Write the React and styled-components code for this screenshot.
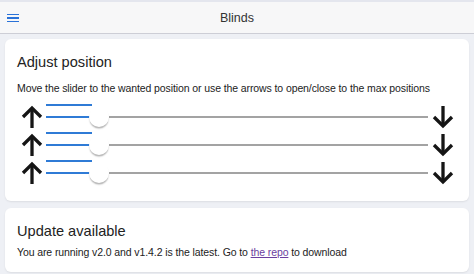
import React from "react";
import styled, { createGlobalStyle } from "styled-components";

const GlobalStyle = createGlobalStyle`
    body {
        margin: 0;
        background: #eef0f5;
        font-family: "Liberation Sans", Arial, sans-serif;
        color: #2b2b2b;
    }
`;

const Header = styled.header`
    position: relative;
    height: 31px;
    border-top: 2px solid #e4e6ee;
    border-bottom: 1px solid #cdced6;
    background: #f7f7f8;
    display: flex;
    align-items: center;
    justify-content: center;
`;

const MenuButton = styled.button`
    position: absolute;
    left: 7px;
    top: 10px;
    width: 12px;
    height: 12px;
    padding: 0;
    border: none;
    background: none;
    display: flex;
    flex-direction: column;
    justify-content: center;
    gap: 2px;
    span {
        display: block;
        height: 1.5px;
        background: #2a72d8;
    }
`;

const Title = styled.h1`
    margin: 0;
    font-size: 12.5px;
    font-weight: normal;
    color: #333;
`;

const Main = styled.main`
    padding: 5px 5px;
    display: flex;
    flex-direction: column;
    gap: 7px;
`;

const Card = styled.section`
    background: #fff;
    border-radius: 6px;
    box-shadow: 0 1px 2px rgba(0, 0, 0, 0.08);
    padding: ${(p) => p.$padding};
`;

const CardTitle = styled.h2`
    margin: 0;
    font-size: 14.6px;
    line-height: 20px;
    font-weight: normal;
    color: #222;
`;

const Text = styled.p`
    margin: ${(p) => p.$margin || "0"};
    font-size: 10.5px;
    letter-spacing: -0.1px;
    line-height: 14px;
    white-space: nowrap;
    color: #222;
    a {
        color: #6b3fa0;
    }
`;

const Rows = styled.div`
    margin-top: 8px;
    display: flex;
    flex-direction: column;
`;

const Row = styled.div`
    height: 28px;
    display: flex;
    align-items: center;
`;

const ArrowButton = styled.button`
    width: 26px;
    height: 26px;
    padding: 0;
    margin: ${(p) => p.$margin};
    border: none;
    background: none;
    svg {
        display: block;
    }
`;

const Slider = styled.div`
    flex: 1;
    display: flex;
    align-items: center;
    height: 28px;
`;

const Fill = styled.div`
    position: relative;
    width: 44px;
    height: 2px;
    background: #2f7bd6;
    &::before {
        content: "";
        position: absolute;
        left: 0;
        top: -12px;
        width: 46px;
        height: 2px;
        background: #2f7bd6;
    }
`;

const Thumb = styled.div`
    position: relative;
    z-index: 1;
    width: 20px;
    height: 20px;
    margin-left: -1px;
    border-radius: 50%;
    background: #fff;
    box-shadow: 0 2px 1.5px -0.5px rgba(0, 0, 0, 0.3);
`;

const Track = styled.div`
    flex: 1;
    height: 2px;
    background: #a3a3a3;
`;

const Arrow = ({ down }) => (
    <svg width="26" height="26" viewBox="0 0 26 26">
        <g
            fill="none"
            stroke="#151515"
            strokeWidth="3.3"
            transform={down ? "rotate(180 13 13)" : undefined}
        >
            <line x1="13" y1="24" x2="13" y2="5" />
            <polyline points="4,13 13,4 22,13" />
        </g>
    </svg>
);

const BlindRow = () => (
    <Row>
        <ArrowButton $margin="0 1px 0 2px">
            <Arrow />
        </ArrowButton>
        <Slider>
            <Fill />
            <Thumb />
            <Track />
        </Slider>
        <ArrowButton $margin="0 0 0 2px">
            <Arrow down />
        </ArrowButton>
    </Row>
);

const App = () => {
    return (
        <>
            <GlobalStyle />
            <Header>
                <MenuButton>
                    <span />
                    <span />
                    <span />
                </MenuButton>
                <Title>Blinds</Title>
            </Header>
            <Main>
                <Card $padding="13px 13px 14px 12px">
                    <CardTitle>Adjust position</CardTitle>
                    <Text $margin="9px 0 0">
                        Move the slider to the wanted position or use the arrows to open/close to the max positions
                    </Text>
                    <Rows>
                        <BlindRow />
                        <BlindRow />
                        <BlindRow />
                    </Rows>
                </Card>
                <Card $padding="13px 12px 13px">
                    <CardTitle>Update available</CardTitle>
                    <Text $margin="4px 0 0">
                        You are running v2.0 and v1.4.2 is the latest. Go to <a href="#">the repo</a> to download
                    </Text>
                </Card>
            </Main>
        </>
    );
};

export default App;
